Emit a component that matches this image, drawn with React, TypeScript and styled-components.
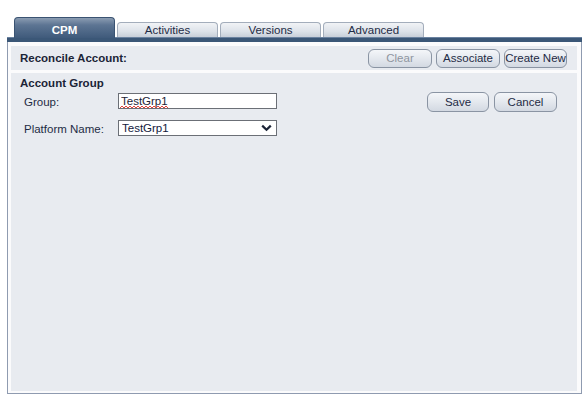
import React from "react"
import styled, { createGlobalStyle } from 'styled-components'

const GlobalStyle = createGlobalStyle`
    html, body {
        margin: 0;
        padding: 0;
        background: #ffffff;
    }
    body {
        font-family: "Liberation Sans", Arial, sans-serif;
        font-size: 11px;
        color: #1e2b45;
    }
`

const tabs = ['CPM', 'Activities', 'Versions', 'Advanced']

// red spell-check squiggle drawn under the misspelled word
const squiggle = Array.from({ length: 12 }, (_, i) => `${i * 4},3 ${i * 4 + 2},1`).join(' ') + ' 48,3'

const App: React.FC<{}> = () => {
    return (
        <Page>
            <GlobalStyle />
            <TabStrip>
                {tabs.map((t, i) => (
                    <Tab key={t} $active={i === 0}>{t}</Tab>
                ))}
            </TabStrip>
            <Bar />
            <Panel>
                <HeaderRow>
                    <HeaderTitle>Reconcile Account:</HeaderTitle>
                    <ButtonGroup $gap={4}>
                        <Button $w={64} disabled>Clear</Button>
                        <Button $w={64}>Associate</Button>
                        <Button $w={63}>Create New</Button>
                    </ButtonGroup>
                </HeaderRow>
                <Body>
                    <SectionTitle>Account Group</SectionTitle>
                    <Content>
                        <Fields>
                            <Label>Group:</Label>
                            <FieldWrap>
                                <TextInput defaultValue="TestGrp1" spellCheck={false} />
                                <Squiggle width="48" height="4" viewBox="0 0 48 4">
                                    <polyline points={squiggle} fill="none" stroke="#e0463c" strokeWidth="1" />
                                </Squiggle>
                            </FieldWrap>
                            <Label>Platform Name:</Label>
                            <FieldWrap>
                                <Select defaultValue="TestGrp1">
                                    <option>TestGrp1</option>
                                </Select>
                                <Chevron width="11" height="8" viewBox="0 0 11 8">
                                    <path d="M1.2 1.6 L5.5 5.8 L9.8 1.6" fill="none" stroke="#1b2437" strokeWidth="2.2" />
                                </Chevron>
                            </FieldWrap>
                        </Fields>
                        <Actions>
                            <Button $w={62} $h={20}>Save</Button>
                            <Button $w={63} $h={20}>Cancel</Button>
                        </Actions>
                    </Content>
                </Body>
            </Panel>
        </Page>
    )
}

export default App

const Page = styled.div`
    width: 575px;
    padding: 17px 0 0 7px;
`

const TabStrip = styled.div`
    display: flex;
    align-items: flex-end;
    gap: 2px;
    height: 20px;
    padding-left: 7px;
`

const Tab = styled.div<{ $active?: boolean }>`
    box-sizing: border-box;
    width: 101px;
    height: ${p => p.$active ? 21 : 15}px;
    margin-bottom: ${p => p.$active ? -1 : 0}px;
    border: 1px solid ${p => p.$active ? '#3a5372' : '#a3adbb'};
    border-bottom: none;
    border-radius: 4px 4px 0 0;
    background: ${p => p.$active
        ? 'linear-gradient(#8b9cb2 0%, #5d7593 35%, #3f5a7b 100%)'
        : 'linear-gradient(#f1f3f6 0%, #dde2e9 60%, #c8cfd9 100%)'};
    color: ${p => p.$active ? '#ffffff' : '#1e2b45'};
    font-weight: ${p => p.$active ? 700 : 400};
    font-size: 11.5px;
    line-height: ${p => p.$active ? 24 : 15}px;
    text-align: center;
    position: relative;
    z-index: 1;
`

const Bar = styled.div`
    height: 4px;
    background: #3b5777;
    border-top: 1px solid #6a82a0;
`

const Panel = styled.div`
    border: 1px solid #8f9bb0;
    border-top: none;
    padding: 4px 4px 2px 3px;
    background: #fbfbfc;
`

const HeaderRow = styled.div`
    display: flex;
    align-items: center;
    justify-content: space-between;
    height: 24px;
    padding: 0 10px 0 9px;
    background: #e8ebf0;
    margin-bottom: 3px;
`

const HeaderTitle = styled.div`
    font-weight: 700;
    font-size: 11.5px;
    color: #1b2437;
`

const ButtonGroup = styled.div<{ $gap: number }>`
    display: flex;
    gap: ${p => p.$gap}px;
`

const Button = styled.button<{ $w: number; $h?: number }>`
    box-sizing: border-box;
    width: ${p => p.$w}px;
    height: ${p => p.$h ?? 19}px;
    padding: 0;
    border: 1px solid #8a94a3;
    border-radius: 6px;
    background: linear-gradient(#f4f6f9 0%, #e4e8ee 50%, #d3d9e2 100%);
    font-family: inherit;
    font-size: 11.5px;
    white-space: nowrap;
    color: #1e2b45;
    cursor: pointer;

    &:disabled {
        color: #8f959f;
        cursor: default;
    }
`

const Body = styled.div`
    height: 318px;
    box-sizing: border-box;
    padding: 2px 20px 0 9px;
    background: #e8ebf0;
`

const SectionTitle = styled.div`
    font-weight: 700;
    font-size: 11.5px;
    line-height: 16px;
    color: #1b2437;
`

const Content = styled.div`
    display: flex;
    justify-content: space-between;
    align-items: flex-start;
`

const Fields = styled.div`
    display: grid;
    grid-template-columns: 94px 159px;
    grid-auto-rows: 16px;
    row-gap: 11px;
    align-items: center;
    padding: 2px 0 0 4px;
`

const Label = styled.div`
    color: #1e2b45;
    font-size: 11.5px;
    line-height: 16px;
    padding-top: 2px;
`

const FieldWrap = styled.div`
    position: relative;
    width: 159px;
    height: 16px;
`

const TextInput = styled.input`
    box-sizing: border-box;
    width: 159px;
    height: 16px;
    margin: 0;
    padding: 0 2px;
    border: 1px solid #6b6f76;
    background: #ffffff;
    font-family: inherit;
    font-size: 11.5px;
    color: #1b2437;
    outline: none;
`

const Squiggle = styled.svg`
    position: absolute;
    left: 2px;
    top: 12px;
    pointer-events: none;
`

const Select = styled.select`
    box-sizing: border-box;
    width: 159px;
    height: 16px;
    margin: 0;
    padding: 0 0 0 3px;
    border: 1px solid #6b6f76;
    border-radius: 0;
    background: #ffffff;
    appearance: none;
    font-family: inherit;
    font-size: 11.5px;
    color: #12203d;
    outline: none;
`

const Chevron = styled.svg`
    position: absolute;
    right: 5px;
    top: 4px;
    pointer-events: none;
`

const Actions = styled.div`
    display: flex;
    gap: 5px;
    margin-top: 1px;
`
